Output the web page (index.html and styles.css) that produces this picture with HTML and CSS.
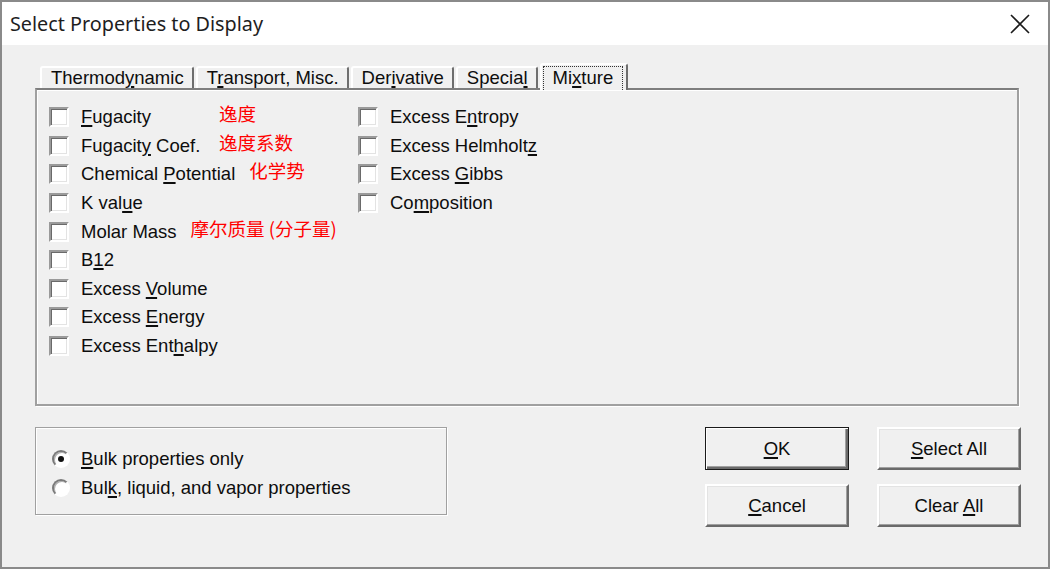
FILE: index.html
```html
<!DOCTYPE html>
<html>
<head>
<meta charset="utf-8">
<title>Select Properties to Display</title>
<link rel="stylesheet" href="styles.css">
</head>
<body>
<div class="window">
  <div class="titlebar">
    <span class="title">Select Properties to Display</span>
    <svg class="close" width="20" height="20" viewBox="0 0 20 20"><path d="M1 1 L19 19 M19 1 L1 19" stroke="#1a1a1a" stroke-width="1.6" fill="none"/></svg>
  </div>
  <div class="body">
    <div class="tabctl">
      <div class="tabstrip">
        <div class="tab">Thermod<u>y</u>namic</div>
        <div class="tab">T<u>r</u>ansport, Misc.</div>
        <div class="tab">Der<u>i</u>vative</div>
        <div class="tab">Specia<u>l</u></div>
        <div class="tab sel"><span class="focus">Mi<u>x</u>ture</span></div>
      </div>
      <div class="page">
        <div class="col">
          <div class="row"><span class="cb"></span><span class="lbl w"><u>F</u>ugacity</span><span class="zh">逸度</span></div>
          <div class="row"><span class="cb"></span><span class="lbl w">Fugacit<u>y</u> Coef.</span><span class="zh">逸度系数</span></div>
          <div class="row"><span class="cb"></span><span class="lbl">Chemical <u>P</u>otential</span><span class="zh">化学势</span></div>
          <div class="row"><span class="cb"></span><span class="lbl">K val<u>u</u>e</span></div>
          <div class="row"><span class="cb"></span><span class="lbl">Molar Mass</span><span class="zh">摩尔质量 (分子量)</span></div>
          <div class="row"><span class="cb"></span><span class="lbl">B<u>1</u>2</span></div>
          <div class="row"><span class="cb"></span><span class="lbl">Excess <u>V</u>olume</span></div>
          <div class="row"><span class="cb"></span><span class="lbl">Excess <u>E</u>nergy</span></div>
          <div class="row"><span class="cb"></span><span class="lbl">Excess Ent<u>h</u>alpy</span></div>
        </div>
        <div class="col">
          <div class="row"><span class="cb"></span><span class="lbl">Excess E<u>n</u>tropy</span></div>
          <div class="row"><span class="cb"></span><span class="lbl">Excess Helmholt<u>z</u></span></div>
          <div class="row"><span class="cb"></span><span class="lbl">Excess <u>G</u>ibbs</span></div>
          <div class="row"><span class="cb"></span><span class="lbl">Co<u>m</u>position</span></div>
        </div>
      </div>
    </div>
    <div class="bottom">
      <div class="group">
        <div class="row rrow"><span class="radio on"></span><span class="lbl"><u>B</u>ulk properties only</span></div>
        <div class="row rrow"><span class="radio"></span><span class="lbl">Bul<u>k</u>, liquid, and vapor properties</span></div>
      </div>
      <div class="btns">
        <div class="btn def"><span><u>O</u>K</span></div>
        <div class="btn"><span><u>S</u>elect All</span></div>
        <div class="btn"><span><u>C</u>ancel</span></div>
        <div class="btn"><span>Clear <u>A</u>ll</span></div>
      </div>
    </div>
  </div>
</div>
</body>
</html>
```

FILE: styles.css
```css
body {
  margin: 0;
  background: #ffffff;
  font-family: "Liberation Sans", Arial, sans-serif;
  color: #0d0d0d;
}

.window {
  width: 1050px;
  height: 569px;
  box-sizing: border-box;
  border: 2px solid #8a8a8a;
  display: flex;
  flex-direction: column;
}

.titlebar {
  height: 43px;
  flex: none;
  background: #ffffff;
  display: flex;
  align-items: center;
  justify-content: space-between;
  padding: 0 18px 0 8px;
}

.title {
  font-family: "Noto Sans", "Open Sans", sans-serif;
  font-size: 19.8px;
  color: #1e1e1e;
}

.close {
  display: block;
}

.body {
  flex: 1;
  background: #f0f0f0;
  padding: 18px 29px 0 33px;
}

u {
  text-decoration-thickness: 1.5px;
  text-underline-offset: 2px;
}

.tabstrip {
  display: flex;
  align-items: flex-end;
  height: 25px;
  padding-left: 5px;
  position: relative;
  z-index: 1;
}

.tab {
  height: 22px;
  box-sizing: border-box;
  border-top: 2px solid #ffffff;
  border-left: 2px solid #ffffff;
  border-right: 2px solid #6e6e6e;
  border-radius: 3px 3px 0 0;
  padding: 0 8px 0 9px;
  margin-right: 2px;
  font-size: 18.5px;
  line-height: 20px;
  white-space: nowrap;
}

.tab.sel {
  height: 27px;
  margin-bottom: -2px;
  background: #f0f0f0;
  padding: 1px 3px 0 1px;
  display: flex;
}

.tab.sel .focus {
  flex: 1;
  border: 1px dotted #333333;
  border-bottom: none;
  padding: 1px 9px 0 9px;
  line-height: 20px;
}

.page {
  height: 318px;
  box-sizing: border-box;
  border-top: 2px solid #7e7e7e;
  border-left: 2px solid #a0a0a0;
  border-right: 2px solid #a0a0a0;
  border-bottom: 2px solid #a0a0a0;
  box-shadow: 1px 1px 0 #ffffff, inset 1px 1px 0 #ffffff;
  padding: 12.7px 0 0 12px;
  display: grid;
  grid-template-columns: 309px 1fr;
  align-content: start;
}

.row {
  display: flex;
  align-items: center;
  height: 28.625px;
  font-size: 18.5px;
  white-space: nowrap;
}

.cb {
  width: 20px;
  height: 20px;
  box-sizing: border-box;
  flex: none;
  border: 2px solid;
  border-color: #9a9a9a #ffffff #ffffff #9a9a9a;
  background: #ffffff;
  box-shadow: inset 1px 1px 0 #6a6a6a, inset -1px -1px 0 #e3e3e3;
  margin-right: 12px;
}

.lbl.w {
  min-width: 124px;
}

.zh {
  color: #ff0000;
  font-family: "Noto Sans CJK SC", sans-serif;
  font-size: 18.5px;
  margin-left: 14px;
  margin-bottom: 8px;
}

.bottom {
  display: flex;
  justify-content: space-between;
  align-items: flex-start;
  margin-top: 21px;
}

.group {
  width: 412px;
  height: 88px;
  box-sizing: border-box;
  border: 1px solid #a0a0a0;
  box-shadow: inset 1px 1px 0 #ffffff, 1px 1px 0 #ffffff;
  padding: 16px 0 0 16px;
}

.rrow {
  height: 29px;
}

.radio {
  width: 18px;
  height: 18px;
  box-sizing: border-box;
  flex: none;
  border-radius: 50%;
  border: 2px solid;
  border-color: #7a7a7a #ffffff #ffffff #7a7a7a;
  background: #ffffff;
  box-shadow: inset 1px 1px 0 #b0b0b0;
  margin-right: 11px;
  display: grid;
  place-items: center;
}

.radio.on::after {
  content: "";
  width: 6px;
  height: 6px;
  border-radius: 50%;
  background: #111111;
}

.btns {
  display: grid;
  grid-template-columns: 144px 144px;
  grid-template-rows: 43px 43px;
  column-gap: 28px;
  row-gap: 14px;
  margin-right: -2px;
}

.btn {
  box-sizing: border-box;
  border: 2px solid;
  border-color: #ffffff #6a6a6a #6a6a6a #ffffff;
  background: #f0f0f0;
  box-shadow: inset -1px -1px 0 #a0a0a0, inset 1px 1px 0 #e3e3e3;
  font-size: 18.5px;
  display: flex;
  align-items: center;
  justify-content: center;
}

.btn.def {
  border: 1px solid #1a1a1a;
  box-shadow: inset 1px 1px 0 #ffffff, inset -2px -2px 0 #6a6a6a, inset -3px -3px 0 #a0a0a0;
}
```
